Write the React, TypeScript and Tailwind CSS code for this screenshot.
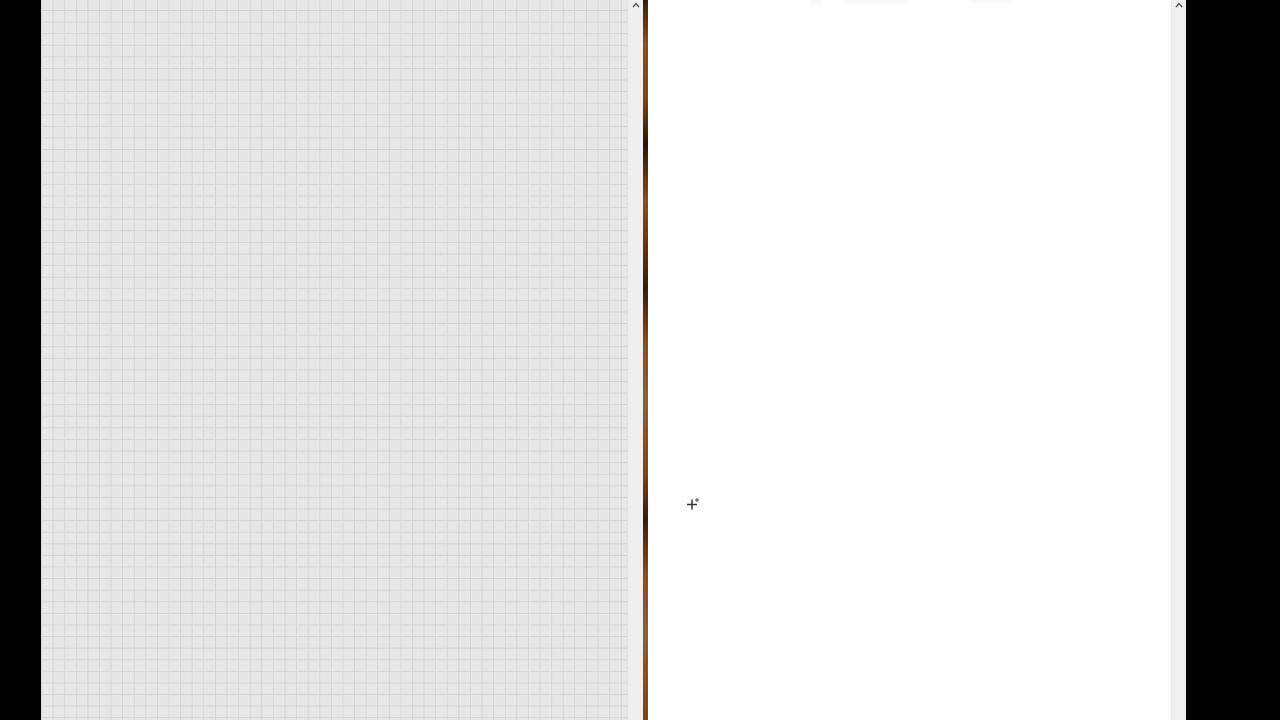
import React from "react";

function ScrollArrow() {
  return (
    <svg width="10" height="8" viewBox="0 0 10 8" className="mx-auto mt-[1px]">
      <path d="M2 6 L5 2.5 L8 6" fill="none" stroke="#555" strokeWidth="1.4" />
    </svg>
  );
}

export default function App() {
  return (
    <div className="relative flex h-[720px] w-[1280px] overflow-hidden bg-black" style={{ fontFamily: '"Liberation Sans", sans-serif' }}>
      <div className="w-[41px] shrink-0 bg-black" />
      <div className="h-full w-[586px] shrink-0 bg-[#e7e7e7] bg-[linear-gradient(to_right,#d3d3d3_1px,transparent_1px),linear-gradient(to_bottom,#d3d3d3_1px,transparent_1px)] bg-[size:11.6px_11.6px] bg-[position:11.6px_10px]" />
      <div className="h-full w-[16px] shrink-0 bg-[#efefef] border-l border-[#e2e2e2]">
        <ScrollArrow />
      </div>
      <div className="h-full w-[5px] shrink-0 bg-[linear-gradient(to_bottom,#3a1c0a_0%,#8a4e1e_6%,#7a4418_14%,#2a1408_20%,#8a4e1e_28%,#3a1c0a_40%,#8a4e1e_48%,#9a5a28_56%,#7a4418_66%,#3a1c0a_72%,#8a4e1e_80%,#9a5a28_88%,#7a4418_100%)]" />
      <div className="relative h-full w-[523px] shrink-0 bg-white">
        <div className="absolute left-[162px] top-0 flex gap-6">
          <div className="h-[4px] w-[12px] bg-[#fafafa]" />
          <div className="h-[4px] w-[60px] bg-[#fafafa]" />
          <div className="ml-[40px] h-[2px] w-[40px] bg-[#f8f8f8]" />
        </div>
        <svg className="absolute left-[38px] top-[497px]" width="14" height="14" viewBox="0 0 14 14">
          <path d="M1 7.5 H11 M6 2.5 V12.5" stroke="#333" strokeWidth="1.5" />
          <path d="M9 3 H13 M11 1 V5" stroke="#444" strokeWidth="1" />
        </svg>
      </div>
      <div className="h-full w-[15px] shrink-0 bg-[#f0f0f0] border-l border-[#e6e6e6]">
        <ScrollArrow />
      </div>
      <div className="flex-1 bg-black" />
    </div>
  );
}
